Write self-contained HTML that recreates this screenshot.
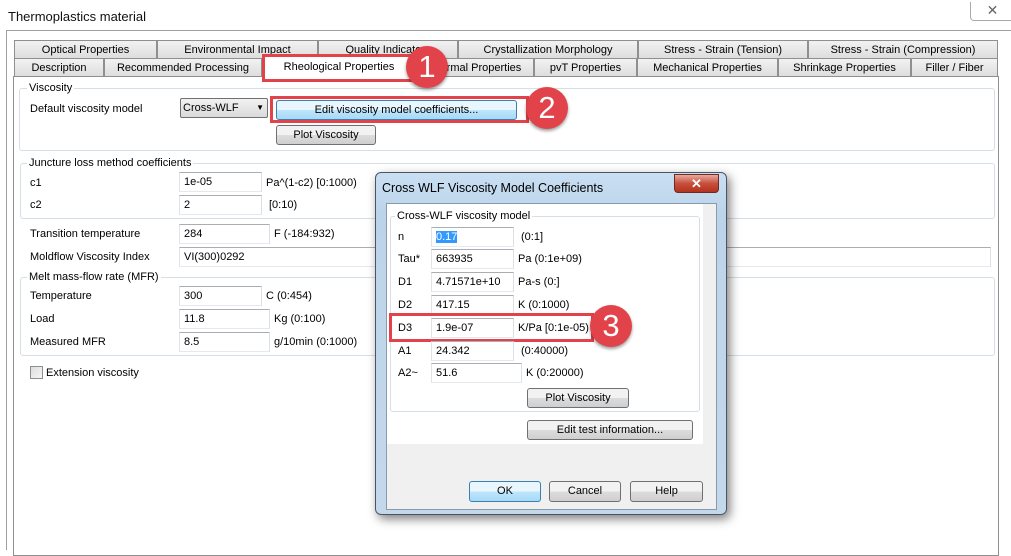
<!DOCTYPE html>
<html><head><meta charset="utf-8"><style>
*{box-sizing:border-box;margin:0;padding:0}
body{width:1011px;height:547px;overflow:hidden;background:#fff;font-family:"Liberation Sans",Arial,sans-serif;font-size:11px;color:#000;position:relative}
.a{position:absolute}
.tab{position:absolute;height:19px;border:1px solid #8e8f8f;border-bottom:none;background:linear-gradient(#f2f2f2,#dcdcdc);text-align:center;line-height:18px;white-space:nowrap;overflow:hidden}
.grp{position:absolute;border:1px solid #d5dfe5;border-radius:3px}
.gl{position:absolute;background:#fff;padding:0 2px;line-height:12px}
.fld{position:absolute;height:20px;border:1px solid #abadb3;background:#fff;padding-left:4px;line-height:18px;border-left-color:#e2e3ea;border-right-color:#dbdfe6;border-bottom-color:#e3e9ef}
.btn{position:absolute;border:1px solid #707070;border-radius:3px;background:linear-gradient(#f2f2f2 50%,#dddddd 50%,#cfcfcf);text-align:center;line-height:18px}
.red{position:absolute;border:3px solid #e2434a}
.circ{position:absolute;width:42px;height:42px;border-radius:50%;background:#e2434a;color:#fff;font-size:31px;text-align:center;line-height:42px;box-shadow:0 2px 3px rgba(0,0,0,.4)}
</style></head><body>
<div class="a" style="left:8px;top:9px;font-size:13px;color:#111">Thermoplastics material</div>
<div class="a" style="left:970px;top:2px;width:45px;height:19px;border:1px solid #aaa;border-top:none;border-radius:0 0 4px 4px;text-align:center;color:#666;font-size:14px;line-height:17px">✕</div>
<div class="a" style="left:6px;top:30px;width:1010px;height:1px;background:#a0a0a0"></div>
<div class="a" style="left:6px;top:30px;width:1px;height:520px;background:#a0a0a0"></div>

<div class="tab" style="left:14px;top:40px;width:143px">Optical Properties</div>
<div class="tab" style="left:157px;top:40px;width:161px">Environmental Impact</div>
<div class="tab" style="left:318px;top:40px;width:140px">Quality Indicators</div>
<div class="tab" style="left:458px;top:40px;width:180px">Crystallization Morphology</div>
<div class="tab" style="left:638px;top:40px;width:170px">Stress - Strain (Tension)</div>
<div class="tab" style="left:808px;top:40px;width:190px">Stress - Strain (Compression)</div>
<div class="tab" style="left:14px;top:58px;width:90px">Description</div>
<div class="tab" style="left:104px;top:58px;width:158px">Recommended Processing</div>
<div class="tab" style="left:415px;top:58px;width:119px">Thermal Properties</div>
<div class="tab" style="left:534px;top:58px;width:103px">pvT Properties</div>
<div class="tab" style="left:637px;top:58px;width:141px">Mechanical Properties</div>
<div class="tab" style="left:778px;top:58px;width:133px">Shrinkage Properties</div>
<div class="tab" style="left:911px;top:58px;width:87px">Filler / Fiber</div>
<div class="a" style="left:13px;top:76px;width:986px;height:480px;border:1px solid #8e8f8f;background:#fff"></div>
<div class="tab" style="left:262px;top:55px;width:154px;height:23px;background:#fff;line-height:22px">Rheological Properties</div>

<div class="grp" style="left:19px;top:88px;width:976px;height:63px"></div>
<div class="gl" style="left:27px;top:82px">Viscosity</div>
<div class="a" style="left:30px;top:103px">Default viscosity model</div>
<div class="a" style="left:180px;top:98px;width:88px;height:20px;border:1px solid #707070;border-radius:2px;background:linear-gradient(#f2f2f2,#dadada);padding-left:2px;line-height:18px">Cross-WLF<span style="position:absolute;right:3px;font-size:8px">▼</span></div>
<div class="btn" style="left:276px;top:100px;width:241px;height:20px;border-color:#3c7fb1;background:linear-gradient(#eaf6fd 50%,#bee6fd 50%,#a7d9f5)">Edit viscosity model coefficients...</div>
<div class="red" style="left:270px;top:96px;width:259px;height:27px"></div>
<div class="circ" style="left:526px;top:87px">2</div>
<div class="btn" style="left:276px;top:125px;width:100px;height:20px">Plot Viscosity</div>
<div class="red" style="left:262px;top:54px;width:154px;height:28px"></div>
<div class="circ" style="left:406px;top:46px">1</div>

<div class="grp" style="left:20px;top:163px;width:975px;height:56px"></div>
<div class="gl" style="left:27px;top:157px">Juncture loss method coefficients</div>
<div class="a" style="left:30px;top:177px">c1</div>
<div class="fld" style="left:179px;top:172px;width:83px">1e-05</div>
<div class="a" style="left:266px;top:177px">Pa^(1-c2) [0:1000)</div>
<div class="a" style="left:30px;top:199px">c2</div>
<div class="fld" style="left:179px;top:195px;width:83px">2</div>
<div class="a" style="left:269px;top:199px">[0:10)</div>
<div class="a" style="left:30px;top:228px">Transition temperature</div>
<div class="fld" style="left:179px;top:224px;width:91px">284</div>
<div class="a" style="left:274px;top:228px">F (-184:932)</div>
<div class="a" style="left:30px;top:251px">Moldflow Viscosity Index</div>
<div class="fld" style="left:179px;top:247px;width:812px">VI(300)0292</div>
<div class="grp" style="left:20px;top:277px;width:975px;height:79px"></div>
<div class="gl" style="left:27px;top:271px">Melt mass-flow rate (MFR)</div>
<div class="a" style="left:30px;top:290px">Temperature</div>
<div class="fld" style="left:179px;top:286px;width:83px">300</div>
<div class="a" style="left:266px;top:290px">C (0:454)</div>
<div class="a" style="left:30px;top:313px">Load</div>
<div class="fld" style="left:179px;top:309px;width:91px">11.8</div>
<div class="a" style="left:274px;top:313px">Kg (0:100)</div>
<div class="a" style="left:30px;top:336px">Measured MFR</div>
<div class="fld" style="left:179px;top:332px;width:91px">8.5</div>
<div class="a" style="left:274px;top:336px">g/10min (0:1000)</div>
<div class="a" style="left:30px;top:366px;width:13px;height:13px;border:1px solid #8e8f8f;background:linear-gradient(135deg,#ddd,#f6f6f6)"></div>
<div class="a" style="left:46px;top:367px">Extension viscosity</div>

<!-- dialog -->
<div class="a" style="left:375px;top:172px;width:352px;height:343px;border:1px solid #4a5560;border-radius:6px;background:linear-gradient(#c9dff3,#bcd4ea 40px,#c4d8ec);box-shadow:3px 4px 10px rgba(0,0,0,.5)"></div>
<div class="a" style="left:382px;top:181px;font-size:12.5px">Cross WLF Viscosity Model Coefficients</div>
<div class="a" style="left:674px;top:174px;width:45px;height:19px;border:1px solid #6d2a24;border-radius:0 0 4px 4px;background:linear-gradient(#e9a99d,#c74f3c 50%,#b5311d);color:#fff;text-align:center;font-weight:bold;font-size:13px;line-height:17px">✕</div>
<div class="a" style="left:386px;top:203px;width:331px;height:307px;border:1px solid #8a9aaa;background:#f0f0f0"></div>
<div class="a" style="left:387px;top:204px;width:316px;height:240px;background:#fff"></div>
<div class="grp" style="left:390px;top:216px;width:310px;height:196px"></div>
<div class="gl" style="left:395px;top:210px">Cross-WLF viscosity model</div>
<div class="a" style="left:398px;top:231px">n</div>
<div class="fld" style="left:431px;top:227px;width:83px"><span style="background:#3399ff;color:#fff">0.17</span></div>
<div class="a" style="left:521px;top:231px">(0:1]</div>
<div class="a" style="left:398px;top:253px">Tau*</div>
<div class="fld" style="left:431px;top:249px;width:83px">663935</div>
<div class="a" style="left:518px;top:253px">Pa (0:1e+09)</div>
<div class="a" style="left:398px;top:276px">D1</div>
<div class="fld" style="left:431px;top:272px;width:83px">4.71571e+10</div>
<div class="a" style="left:518px;top:276px">Pa-s (0:]</div>
<div class="a" style="left:398px;top:299px">D2</div>
<div class="fld" style="left:431px;top:295px;width:83px">417.15</div>
<div class="a" style="left:518px;top:299px">K (0:1000)</div>
<div class="a" style="left:398px;top:322px">D3</div>
<div class="fld" style="left:431px;top:318px;width:83px">1.9e-07</div>
<div class="a" style="left:518px;top:322px">K/Pa [0:1e-05)</div>
<div class="red" style="left:389px;top:313px;width:205px;height:29px"></div>
<div class="circ" style="left:590px;top:305px">3</div>
<div class="a" style="left:398px;top:345px">A1</div>
<div class="fld" style="left:431px;top:341px;width:83px">24.342</div>
<div class="a" style="left:521px;top:345px">(0:40000)</div>
<div class="a" style="left:398px;top:367px">A2~</div>
<div class="fld" style="left:431px;top:363px;width:91px">51.6</div>
<div class="a" style="left:526px;top:367px">K (0:20000)</div>
<div class="btn" style="left:527px;top:388px;width:102px;height:20px">Plot Viscosity</div>
<div class="btn" style="left:527px;top:420px;width:166px;height:20px">Edit test information...</div>
<div class="btn" style="left:469px;top:481px;width:72px;height:21px;border-color:#3c7fb1;background:linear-gradient(#eaf6fd 50%,#bee6fd 50%,#a7d9f5)">OK</div>
<div class="btn" style="left:549px;top:481px;width:72px;height:21px">Cancel</div>
<div class="btn" style="left:630px;top:481px;width:73px;height:21px">Help</div>
</body></html>
